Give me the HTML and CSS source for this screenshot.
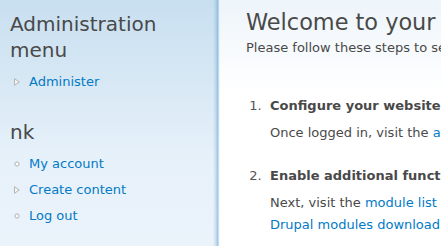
FILE: index.html
```html
<!DOCTYPE html>
<html lang="en">
<head>
  <meta charset="UTF-8">
  <meta name="viewport" content="width=device-width, initial-scale=1.0">
  <title>Welcome</title>
  <link rel="stylesheet" href="styles.css">
</head>
<body>
  <div class="page">
    <div class="sidebar">
      <div class="block">
        <h2>Administration menu</h2>
        <ul class="menu">
          <li><svg class="bullet" width="6" height="8" viewBox="0 0 6 8"><path d="M0.5 0.7 L5.3 4 L0.5 7.3 Z" fill="#f4f4f4" stroke="#b5b5b5" stroke-width="1"/></svg><a href="#">Administer</a></li>
        </ul>
      </div>
      <div class="block">
        <h2>nk</h2>
        <ul class="menu">
          <li><svg class="bullet" width="6" height="8" viewBox="0 0 6 8"><circle cx="3" cy="4" r="2.1" fill="#fff" stroke="#b0b0b0" stroke-width="1"/></svg><a href="#">My account</a></li>
          <li><svg class="bullet" width="6" height="8" viewBox="0 0 6 8"><path d="M0.5 0.7 L5.3 4 L0.5 7.3 Z" fill="#f4f4f4" stroke="#b5b5b5" stroke-width="1"/></svg><a href="#">Create content</a></li>
          <li><svg class="bullet" width="6" height="8" viewBox="0 0 6 8"><circle cx="3" cy="4" r="2.1" fill="#fff" stroke="#b0b0b0" stroke-width="1"/></svg><a href="#">Log out</a></li>
        </ul>
      </div>
    </div>

    <div class="content">
      <h1>Welcome to your new Drupal website!</h1>
      <p class="intro">Please follow these steps to set up and start using your website:</p>
      <ol class="first-time">
        <li>
          <strong>Configure your website</strong>
          Once logged in, visit the <a href="#">administration section</a>, where you can customize and configure all aspects of your website.
        </li>
        <li>
          <strong>Enable additional functionality</strong>
          Next, visit the <a href="#">module list</a> and enable features which suit your specific needs. You can find additional modules in the<br>
          <a href="#">Drupal modules download section</a>.
        </li>
      </ol>
    </div>
  </div>
</body>
</html>
```

FILE: styles.css
```css
body {
  margin: 0;
  padding: 0;
  font-family: 'DejaVu Sans', Verdana, sans-serif;
  font-size: 13px;
  color: #494949;
  background: #ffffff;
  overflow: hidden;
}

a {
  color: #027ac6;
  text-decoration: none;
}

.page {
  display: flex;
  min-height: 246px;
  width: 1100px;
}

.sidebar {
  width: 196px;
  flex: none;
  padding: 11px 14px 0 10px;
  background:
    linear-gradient(to right, rgba(120, 170, 210, 0) 213px, rgba(120, 170, 210, 0.3) 216px, rgba(100, 160, 210, 0.6) 218px, rgba(255, 255, 255, 0.6) 219px),
    linear-gradient(to bottom, #c8dff0 0px, #d9e9f5 90px, #e7f1fa 160px, #ebf3fb 246px);
}

.block h2 {
  font-size: 20px;
  font-weight: normal;
  line-height: 26px;
  margin: 0 0 6px 0;
  color: #494949;
}

.menu {
  list-style: none;
  margin: 0 0 24px 0;
  padding: 0;
}

.menu li {
  line-height: 26px;
}

.bullet {
  margin: 0 9px 0 4px;
  vertical-align: 0px;
}

.content {
  flex: 1;
  padding: 8px 0 0 26px;
  white-space: nowrap;
  background: linear-gradient(to bottom, #edf4fa 0px, #f6fafd 45px, #ffffff 95px);
}

.content h1 {
  font-size: 22.4px;
  font-weight: normal;
  line-height: 28px;
  margin: 0;
  color: #494949;
}

.intro {
  margin: 0;
  line-height: 22px;
  padding-top: 1px;
}

.first-time {
  margin: 17px 0 0 0;
  padding-left: 24px;
  line-height: 22px;
}

.first-time li {
  margin-bottom: 2px;
}

.first-time li::marker {
  content: counter(list-item) ".\00a0\00a0";
  color: #555555;
}

.first-time strong {
  display: block;
  padding: 19px 0 5px 0;
  color: #494949;
}
```
